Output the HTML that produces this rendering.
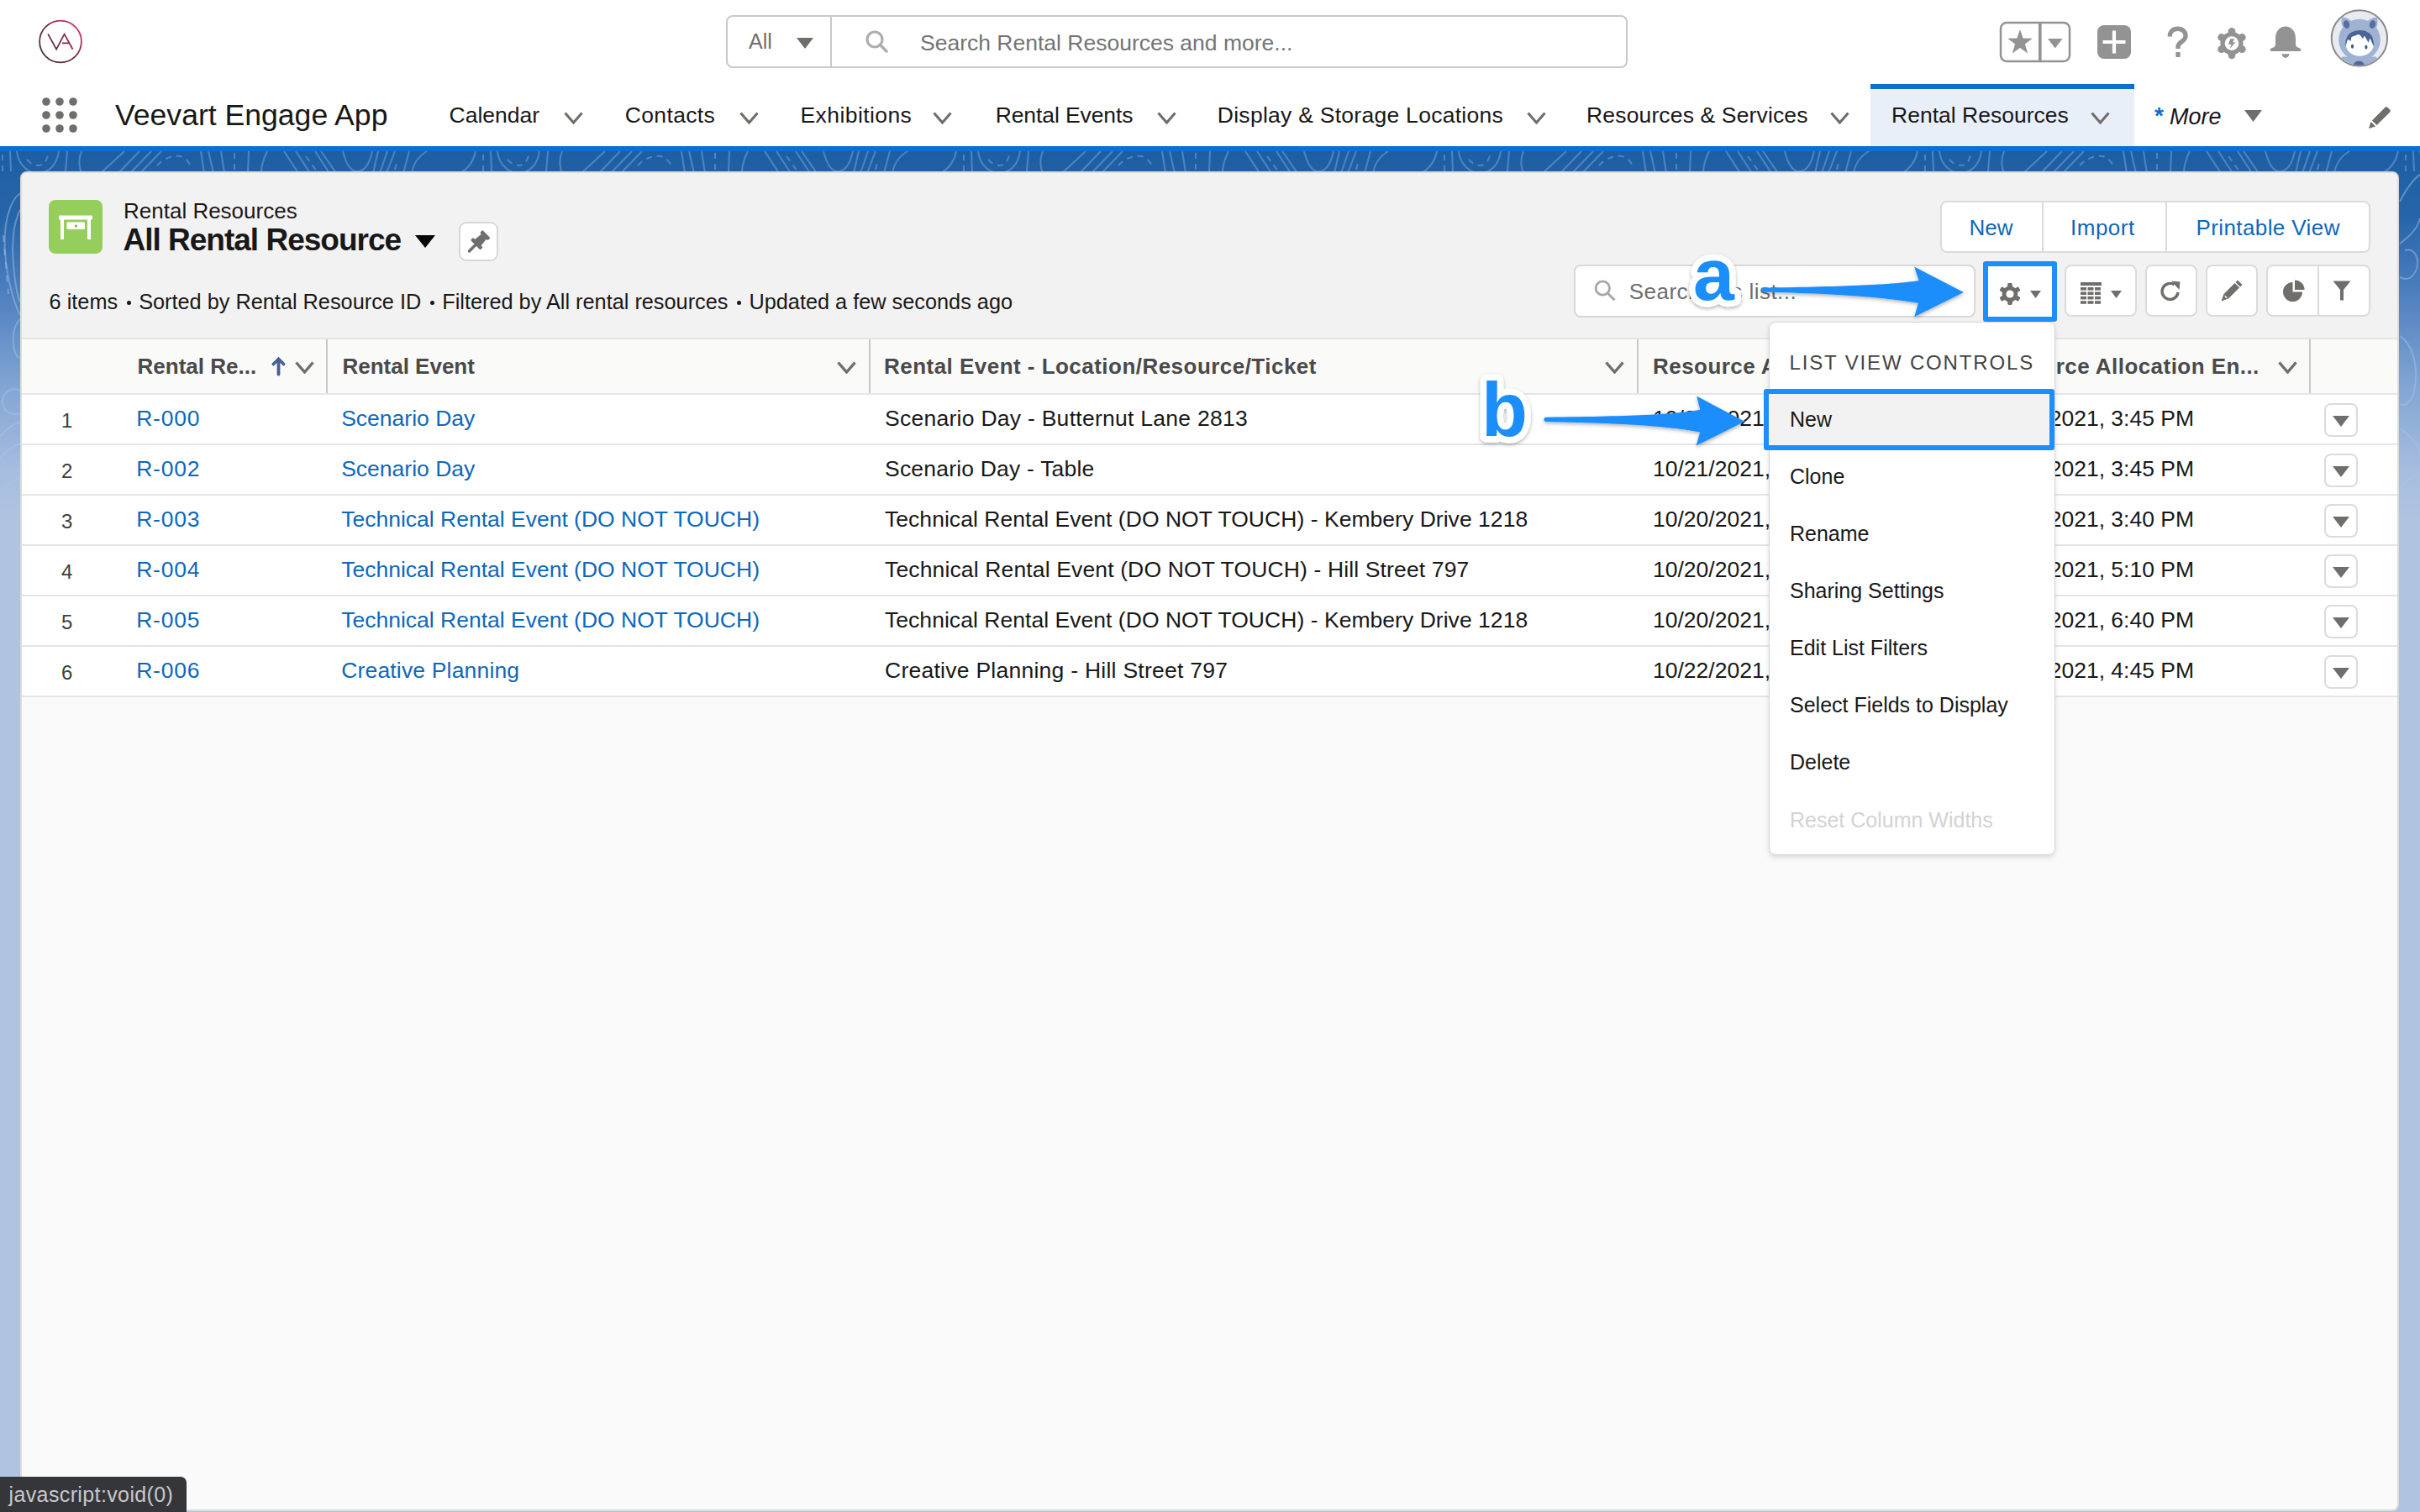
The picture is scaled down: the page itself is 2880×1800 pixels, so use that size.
<!DOCTYPE html>
<html><head><meta charset="utf-8"><title>Rental Resources</title>
<style>
html,body{margin:0;padding:0;}
body{width:2880px;height:1800px;overflow:hidden;position:relative;background:#fff;font-family:"Liberation Sans",sans-serif;color:#181818;}
.t{position:absolute;white-space:nowrap;line-height:1;}
</style></head><body>
<div style="position:absolute;left:0px;top:180px;width:2880px;height:1620px;background:#b0c4df;"></div>
<div style="position:absolute;left:0px;top:180px;width:2880px;height:440px;background:linear-gradient(to bottom,#1d5ea3 0%,#2665aa 18%,#4f80bf 39%,#80a4d2 62.5%,#a6bde0 86%,#b0c4df 100%);"></div>
<svg style="position:absolute;left:0;top:180px" width="2880" height="460" viewBox="0 0 2880 460"><defs>
<pattern id="topo" width="572" height="30" patternUnits="userSpaceOnUse"><g fill="none" stroke="#5f95d0" stroke-width="2" stroke-opacity="0.7"><path d="M12 0 L13 24 M80 0 L78 24 M97 0 C93 10 94 20 97 26 M20 0 C22 18 35 26 45 26 C58 26 68 16 70 0"/>
<path d="M3 4 L3 24 M32 10 C38 17 45 18 50 16 C54 14 57 8 58 0 M187 17 C195 8 205 5 215 6 C220 8 225 12 227 18 M279 2 L279 24 M364 6 L377 24 M470 22 L473 10 M583 0 L583 26" stroke-dasharray="7 6"/>
<path d="M120 26 L148 0 M141 26 L166 0 M155 26 L180 0 M167 26 L192 0 M239 0 L243 26 M248 0 L254 26 M263 0 L267 26 M296 0 L295 26"/>
<path d="M318 0 C313 10 311 18 311 26 M338 0 L355 26 M352 0 L369 26 M375 0 L392 26 M382 0 L400 26 M408 0 C412 16 418 24 425 24 C434 24 440 14 443 0"/>
<path d="M444 26 L450 0 M452 26 L461 0 M460 26 L470 0 M480 26 L487 0 M490 26 C492 14 498 6 508 0 M548 26 C558 20 564 10 566 0"/></g></pattern></defs>
<rect width="2880" height="26" fill="url(#topo)"/>
<g fill="none" stroke="#a9c6ea" stroke-width="2" stroke-opacity="0.45">
<path d="M24 50 C10 60 4 90 6 120 C8 150 16 180 24 195 M24 70 C16 85 14 110 16 135 C18 160 22 175 24 180"/>
<path d="M4 100 L10 170" stroke-dasharray="8 8"/>
<path d="M24 200 C18 205 15 215 16 230 C17 240 20 245 24 246 M24 285 C10 280 2 290 3 300 C4 310 14 315 24 312 M0 340 C8 330 16 325 24 322 M0 365 C10 355 18 350 24 348 M4 400 C10 395 18 392 24 390"/>
<path d="M2856 60 C2866 40 2876 30 2880 28 M2856 110 C2870 100 2878 90 2880 80 M2856 150 C2866 155 2872 150 2876 140 C2880 125 2872 115 2862 118 M2856 220 C2872 230 2880 260 2872 290 C2868 300 2860 305 2856 300 M2856 330 C2870 340 2880 350 2880 360 M2856 400 C2866 390 2876 385 2880 384"/>
</g></svg>
<div style="position:absolute;left:0px;top:0px;width:2880px;height:174px;background:#fff;"></div>
<div style="position:absolute;left:0px;top:174px;width:2880px;height:6px;background:#0b6fd4;"></div>
<svg style="position:absolute;left:44px;top:22px" width="56" height="56" viewBox="0 0 56 56">
<defs><linearGradient id="lg" gradientUnits="userSpaceOnUse" x1="8" y1="48" x2="48" y2="8"><stop offset="0" stop-color="#40303c"/><stop offset="0.55" stop-color="#7a2c4c"/><stop offset="1" stop-color="#d8355d"/></linearGradient></defs>
<circle cx="28" cy="27.5" r="24.9" fill="none" stroke="url(#lg)" stroke-width="1.8"/>
<path d="M13.1 18.4 L23.1 36.6 L32.6 18.6 L42.6 36.8 M29.9 29.4 L38.5 29.2" fill="none" stroke="url(#lg)" stroke-width="1.8" stroke-linejoin="miter"/>
</svg>
<div style="position:absolute;left:864px;top:18px;width:1073px;height:63px;box-sizing:border-box;border:2px solid #c9c9c9;border-radius:8px;background:#fff;"></div>
<div style="position:absolute;left:988px;top:20px;width:2px;height:59px;background:#c9c9c9;"></div>
<div class="t" style="left:891px;top:37px;font-size:25px;color:#706e6b;">All</div>
<svg style="position:absolute;left:947px;top:44px" width="22" height="15" viewBox="0 0 22 15"><path d="M1 1 L21 1 L11 14 Z" fill="#706e6b"/></svg>
<svg style="position:absolute;left:1028px;top:35px" width="32" height="30" viewBox="0 0 32 30"><circle cx="13" cy="12" r="9" fill="none" stroke="#aeaeae" stroke-width="3.2"/><path d="M19.5 18.5 L27 26" stroke="#aeaeae" stroke-width="3.6" stroke-linecap="round"/></svg>
<div class="t" style="left:1095px;top:38px;font-size:26.5px;color:#747474;">Search Rental Resources and more...</div>
<svg style="position:absolute;left:2378px;top:24px" width="88" height="52" viewBox="0 0 88 52">
<rect x="3" y="3" width="82" height="46" rx="7" fill="#fff" stroke="#939393" stroke-width="2.5"/>
<rect x="48" y="3" width="3.6" height="46" fill="#939393"/>
<path d="M26 11 L29.6 21.6 L40.8 21.8 L31.9 28.6 L35.2 39.4 L26 33 L16.8 39.4 L20.1 28.6 L11.2 21.8 L22.4 21.6 Z" fill="#939393"/>
<path d="M59 22 L76.5 22 L67.8 33.6 Z" fill="#939393"/>
</svg>
<svg style="position:absolute;left:2496px;top:30px" width="40" height="40" viewBox="0 0 40 40">
<rect x="0" y="0" width="40" height="40" rx="8" fill="#939393"/>
<path d="M20 6.5 V33.5 M6.5 20 H33.5" stroke="#fff" stroke-width="4.2"/>
</svg>
<svg style="position:absolute;left:2576px;top:30px" width="32" height="42" viewBox="0 0 32 42">
<path d="M6.3 13.5 C6.3 7.5 10 4.3 15.8 4.3 C21.5 4.3 25.1 8 25.1 12.5 C25.1 16.5 22 18.5 19.5 20.3 C17.2 22 16 23.5 16 26 L16 28" fill="none" stroke="#939393" stroke-width="5.4"/>
<rect x="13.3" y="32.1" width="5.4" height="5.9" rx="0.8" fill="#939393"/>
</svg>
<svg style="position:absolute;left:2637px;top:32px" width="38" height="40" viewBox="0 0 38 40">
<g fill="#939393"><circle cx="19" cy="19.6" r="13.6"/><circle cx="19.00" cy="5.40" r="4.4"/><circle cx="31.30" cy="12.50" r="4.4"/><circle cx="31.30" cy="26.70" r="4.4"/><circle cx="19.00" cy="33.80" r="4.4"/><circle cx="6.70" cy="26.70" r="4.4"/><circle cx="6.70" cy="12.50" r="4.4"/></g>
<circle cx="19" cy="19.6" r="8.3" fill="#fff"/>
<path d="M17.4 14.2 L22.4 14.2 L20 18.2 L23.4 18.2 L16.8 26 L18.4 20.8 L14.8 20.8 Z" fill="#939393"/>
</svg>
<svg style="position:absolute;left:2699px;top:30px" width="42" height="42" viewBox="0 0 42 42">
<path d="M9 16 C9 7.5 14 1.6 21 1.6 C28 1.6 33 7.5 33 16 L33 23 C33 25 35 26.5 37 27 C38.6 27.5 39.2 28.5 39.2 29.5 L39.2 30 C39.2 30.6 38.7 31 38 31 L4 31 C3.3 31 2.8 30.6 2.8 30 L2.8 29.5 C2.8 28.5 3.4 27.5 5 27 C7 26.5 9 25 9 23 Z" fill="#939393"/>
<path d="M16.4 34.2 L25.5 34.2 C25 37 23.5 38.8 21 38.8 C18.5 38.8 17 37 16.4 34.2 Z" fill="#939393"/>
</svg>
<svg style="position:absolute;left:2773px;top:11px" width="70" height="70" viewBox="0 0 70 70">
<defs><clipPath id="av"><circle cx="34.9" cy="34.4" r="32.3"/></clipPath></defs>
<circle cx="34.9" cy="34.4" r="33.2" fill="#e9ebf2" stroke="#8a8a8a" stroke-width="2"/>
<g clip-path="url(#av)">
<path d="M14 10 C18 9 22 11 25 14 L45 14 C48 11 52 9 56 10 C57 14 57 18 55 22 L16 22 C13 18 13 14 14 10 Z" fill="#9fb2d2"/>
<circle cx="35" cy="36.5" r="24.8" fill="#9fb2d2"/>
<path d="M10 78 L14 56.5 L55 56.5 L60 78 Z" fill="#9fb2d2"/>
<ellipse cx="19.5" cy="18" rx="3.6" ry="5" transform="rotate(-15 19.5 18)" fill="#56709e"/>
<ellipse cx="50.5" cy="18" rx="3.6" ry="5" transform="rotate(15 50.5 18)" fill="#56709e"/>
<ellipse cx="35.3" cy="40.5" rx="17" ry="15.2" fill="#fff"/>
<path d="M18.3 45 C17 34 22 25.5 35 25 C47 24.5 53.5 33 52 44.5 C50.5 41 49 38 47.5 34.5 C46.5 37 46 38.5 45.5 40 C44 36.5 42.5 33.5 40.5 31.5 C40 34 39.5 34.5 39 35 C37.5 33 36 31 34 29.5 C35 31 34 30.5 33.5 30 C31 31 28 32 25.5 33 C25 35 24.8 36.5 24.5 38 C23 37 22 36 21 36 C20 39 19 42 18.3 45 Z" fill="#4a6596"/>
<ellipse cx="26.5" cy="44.2" rx="1.6" ry="2.6" fill="#4a5a80"/>
<ellipse cx="42.9" cy="45" rx="1.6" ry="2.6" fill="#4a5a80"/>
<circle cx="34.3" cy="68.5" r="7" fill="#4f6898"/>
</g></svg>
<svg style="position:absolute;left:48px;top:114px" width="46" height="46" viewBox="0 0 46 46"><g fill="#706e6b"><circle cx="7" cy="7" r="4.8"/><circle cx="7" cy="23" r="4.8"/><circle cx="7" cy="39" r="4.8"/><circle cx="23" cy="7" r="4.8"/><circle cx="23" cy="23" r="4.8"/><circle cx="23" cy="39" r="4.8"/><circle cx="39" cy="7" r="4.8"/><circle cx="39" cy="23" r="4.8"/><circle cx="39" cy="39" r="4.8"/></g></svg>
<div class="t" style="left:137px;top:120px;font-size:35.6px;">Veevart Engage App</div>
<div style="position:absolute;left:2226px;top:100px;width:314px;height:74px;background:#e9eff9;"></div>
<div style="position:absolute;left:2226px;top:100px;width:314px;height:6px;background:#0b6fd4;"></div>
<div class="t" style="left:534.5px;top:124px;font-size:26.5px;">Calendar</div>
<svg style="position:absolute;left:671px;top:133px" width="23" height="15" viewBox="0 0 23 15"><path d="M1.5 1.5 L11.5 13 L21.5 1.5" fill="none" stroke="#706e6b" stroke-width="3.1"/></svg>
<div class="t" style="left:743.8px;top:124px;font-size:26.5px;letter-spacing:0.35px;">Contacts</div>
<svg style="position:absolute;left:880px;top:133px" width="23" height="15" viewBox="0 0 23 15"><path d="M1.5 1.5 L11.5 13 L21.5 1.5" fill="none" stroke="#706e6b" stroke-width="3.1"/></svg>
<div class="t" style="left:952.5px;top:124px;font-size:26.5px;letter-spacing:0.42px;">Exhibitions</div>
<svg style="position:absolute;left:1110px;top:133px" width="23" height="15" viewBox="0 0 23 15"><path d="M1.5 1.5 L11.5 13 L21.5 1.5" fill="none" stroke="#706e6b" stroke-width="3.1"/></svg>
<div class="t" style="left:1184.7px;top:124px;font-size:26.5px;letter-spacing:-0.1px;">Rental Events</div>
<svg style="position:absolute;left:1377px;top:133px" width="23" height="15" viewBox="0 0 23 15"><path d="M1.5 1.5 L11.5 13 L21.5 1.5" fill="none" stroke="#706e6b" stroke-width="3.1"/></svg>
<div class="t" style="left:1448.8px;top:124px;font-size:26.5px;letter-spacing:0.27px;">Display &amp; Storage Locations</div>
<svg style="position:absolute;left:1817px;top:133px" width="23" height="15" viewBox="0 0 23 15"><path d="M1.5 1.5 L11.5 13 L21.5 1.5" fill="none" stroke="#706e6b" stroke-width="3.1"/></svg>
<div class="t" style="left:1888.1px;top:124px;font-size:26.5px;letter-spacing:0.14px;">Resources &amp; Services</div>
<svg style="position:absolute;left:2178px;top:133px" width="23" height="15" viewBox="0 0 23 15"><path d="M1.5 1.5 L11.5 13 L21.5 1.5" fill="none" stroke="#706e6b" stroke-width="3.1"/></svg>
<div class="t" style="left:2251.1px;top:124px;font-size:26.5px;">Rental Resources</div>
<svg style="position:absolute;left:2488px;top:133px" width="23" height="15" viewBox="0 0 23 15"><path d="M1.5 1.5 L11.5 13 L21.5 1.5" fill="none" stroke="#706e6b" stroke-width="3.1"/></svg>
<div class="t" style="left:2564px;top:124px;font-size:28px;font-weight:700;color:#0b6fd4;">*</div>
<div class="t" style="left:2582px;top:126px;font-size:27px;font-style:italic;">More</div>
<svg style="position:absolute;left:2670px;top:130px" width="23" height="16" viewBox="0 0 23 16"><path d="M1 1 L22 1 L11.5 15 Z" fill="#706e6b"/></svg>
<svg style="position:absolute;left:2818px;top:126px" width="28" height="28" viewBox="0 0 28 28"><path d="M20.5 1.8 C21.3 1 22.6 1 23.4 1.8 L26.2 4.6 C27 5.4 27 6.7 26.2 7.5 L10.6 23.1 L4.9 17.4 Z" fill="#706e6b"/><path d="M3.6 18.9 L9.1 24.4 L1 27 Z" fill="#706e6b"/></svg>
<div style="position:absolute;left:24px;top:204px;width:2831px;height:1595px;box-sizing:border-box;border:2px solid #dddbda;border-radius:8px;background:#fafafa;overflow:hidden;"></div>
<div style="position:absolute;left:26px;top:206px;width:2827px;height:197px;background:#f3f2f2;border-radius:6px 6px 0 0;"></div>
<svg style="position:absolute;left:58px;top:238px" width="64" height="64" viewBox="0 0 64 64">
<rect width="64" height="64" rx="8" fill="#96ce5d"/>
<rect x="12" y="18.5" width="40" height="5" rx="1" fill="#fff"/>
<rect x="14" y="23" width="4" height="24" fill="#fff"/><rect x="46" y="23" width="4" height="24" fill="#fff"/>
<rect x="21.5" y="26.5" width="21.5" height="8.5" rx="1" fill="#fff"/>
<circle cx="32.5" cy="31" r="1.6" fill="#7fae52"/>
</svg>
<div class="t" style="left:147px;top:238px;font-size:26px;">Rental Resources</div>
<div class="t" style="left:146.5px;top:267px;font-size:37px;font-weight:700;letter-spacing:-1px;">All Rental Resource</div>
<svg style="position:absolute;left:493px;top:279px" width="26" height="17" viewBox="0 0 26 17"><path d="M1 1 L25 1 L13 16 Z" fill="#080707"/></svg>
<div style="position:absolute;left:546px;top:264px;width:47px;height:47px;box-sizing:border-box;border:2px solid #d8d8d8;border-radius:9px;background:#fff;"></div>
<svg style="position:absolute;left:553px;top:271px" width="34" height="34" viewBox="0 0 34 34"><g transform="translate(25.9 7.6) rotate(45)" fill="#706e6b"><rect x="-6.6" y="0" width="13.2" height="4.4" rx="1.2"/><path d="M-4.2 4 L4.2 4 L5.4 15 L-5.4 15 Z"/><rect x="-8.2" y="14.2" width="16.4" height="4.4" rx="1.2"/><rect x="-1.7" y="17" width="3.4" height="13.6" rx="1.7"/></g></svg>
<div class="t" style="left:58.6px;top:347px;font-size:25.3px;">6 items<span style="display:inline-block;width:5px;height:5px;border-radius:50%;background:#181818;margin:0 9.5px 0 10.5px;vertical-align:5.5px"></span>Sorted by Rental Resource ID<span style="display:inline-block;width:5px;height:5px;border-radius:50%;background:#181818;margin:0 9.5px 0 10.5px;vertical-align:5.5px"></span>Filtered by All rental resources<span style="display:inline-block;width:5px;height:5px;border-radius:50%;background:#181818;margin:0 9.5px 0 10.5px;vertical-align:5.5px"></span>Updated a few seconds ago</div>
<div style="position:absolute;left:2309px;top:239px;width:512px;height:62px;box-sizing:border-box;border:2px solid #dddbda;border-radius:8px;background:#fff;"></div>
<div style="position:absolute;left:2430px;top:241px;width:2px;height:58px;background:#dddbda;"></div>
<div style="position:absolute;left:2577px;top:241px;width:2px;height:58px;background:#dddbda;"></div>
<div class="t" style="left:2343.6px;top:258px;font-size:26px;color:#0d68bb;">New</div>
<div class="t" style="left:2464px;top:258px;font-size:26px;color:#0d68bb;letter-spacing:0.5px;">Import</div>
<div class="t" style="left:2613.5px;top:258px;font-size:26px;color:#0d68bb;letter-spacing:0.4px;">Printable View</div>
<div style="position:absolute;left:1872.5px;top:314.5px;width:478.5px;height:63px;box-sizing:border-box;border:2px solid #d8d8d8;border-radius:8px;background:#fff;"></div>
<svg style="position:absolute;left:1896px;top:332px" width="28" height="28" viewBox="0 0 28 28"><circle cx="11.3" cy="11" r="8.2" fill="none" stroke="#a8a8a8" stroke-width="2.8"/><path d="M17.2 17 L25.5 25.2" stroke="#a8a8a8" stroke-width="3"/></svg>
<div class="t" style="left:1938.8px;top:334px;font-size:26px;color:#6e6e6e;letter-spacing:0.45px;">Search this list...</div>
<div style="position:absolute;left:2362px;top:313px;width:84px;height:68px;background:#fff;"></div>
<div style="position:absolute;left:2457px;top:315px;width:86px;height:62px;box-sizing:border-box;border:2px solid #dddbda;border-radius:8px;background:#fff;"></div>
<div style="position:absolute;left:2553px;top:315px;width:62px;height:62px;box-sizing:border-box;border:2px solid #dddbda;border-radius:8px;background:#fff;"></div>
<div style="position:absolute;left:2625px;top:315px;width:62px;height:62px;box-sizing:border-box;border:2px solid #dddbda;border-radius:8px;background:#fff;"></div>
<div style="position:absolute;left:2697px;top:315px;width:124px;height:62px;box-sizing:border-box;border:2px solid #dddbda;border-radius:8px;background:#fff;"></div>
<div style="position:absolute;left:2758px;top:317px;width:2px;height:58px;background:#dddbda;"></div>
<svg style="position:absolute;left:2378px;top:335px" width="28" height="30" viewBox="0 0 28 30">
<g fill="#706e6b"><circle cx="14" cy="15" r="9.4"/>
<rect x="11.2" y="2" width="5.6" height="6.5" rx="1.4"/><rect x="11.2" y="21.5" width="5.6" height="6.5" rx="1.4"/>
<rect x="11.2" y="2" width="5.6" height="6.5" rx="1.4" transform="rotate(60 14 15)"/><rect x="11.2" y="21.5" width="5.6" height="6.5" rx="1.4" transform="rotate(60 14 15)"/>
<rect x="11.2" y="2" width="5.6" height="6.5" rx="1.4" transform="rotate(-60 14 15)"/><rect x="11.2" y="21.5" width="5.6" height="6.5" rx="1.4" transform="rotate(-60 14 15)"/></g>
<circle cx="14" cy="15" r="4.6" fill="#fff"/></svg>
<svg style="position:absolute;left:2416px;top:346px" width="13" height="9" viewBox="0 0 13 9"><path d="M0 0 L13 0 L6.5 9 Z" fill="#706e6b"/></svg>
<svg style="position:absolute;left:2476px;top:336px" width="25" height="27" viewBox="0 0 25 27"><g fill="#706e6b">
<rect x="0" y="0" width="25" height="4"/><rect x="0.0" y="6.0" width="7" height="3.6"/><rect x="8.5" y="6.0" width="7" height="3.6"/><rect x="17.0" y="6.0" width="7" height="3.6"/><rect x="0.0" y="11.4" width="7" height="3.6"/><rect x="8.5" y="11.4" width="7" height="3.6"/><rect x="17.0" y="11.4" width="7" height="3.6"/><rect x="0.0" y="16.8" width="7" height="3.6"/><rect x="8.5" y="16.8" width="7" height="3.6"/><rect x="17.0" y="16.8" width="7" height="3.6"/><rect x="0.0" y="22.200000000000003" width="7" height="3.6"/><rect x="8.5" y="22.200000000000003" width="7" height="3.6"/><rect x="17.0" y="22.200000000000003" width="7" height="3.6"/></g></svg>
<svg style="position:absolute;left:2512px;top:346px" width="13" height="9" viewBox="0 0 13 9"><path d="M0 0 L13 0 L6.5 9 Z" fill="#706e6b"/></svg>
<svg style="position:absolute;left:2570px;top:332px" width="28" height="28" viewBox="0 0 28 28"><path d="M22 16 A9.5 9.5 0 1 1 17.5 6.8" fill="none" stroke="#706e6b" stroke-width="3.4"/><path d="M14 2.5 L24.5 3.5 L23.5 13 Z" fill="#706e6b"/></svg>
<svg style="position:absolute;left:2642px;top:332px" width="28" height="28" viewBox="0 0 28 28"><path d="M21 1.5 L26.5 7 L10 23.5 L4.5 18 Z" fill="#706e6b"/><path d="M4.5 18 L10 23.5 L1.5 26.5 Z" fill="#706e6b"/><path d="M17.8 4.2 L23.8 10.2 M5.8 20.5 L8 22.7" stroke="#fff" stroke-width="1.3"/></svg>
<svg style="position:absolute;left:2717px;top:332px" width="27" height="28" viewBox="0 0 27 28"><path d="M11.5 4 A11.5 11.5 0 1 0 23 15.5 L11.5 15.5 Z" fill="#706e6b"/><path d="M14 1.5 A11.5 11.5 0 0 1 25.5 13 L14 13 Z" fill="#706e6b"/></svg>
<svg style="position:absolute;left:2776px;top:334px" width="22" height="25" viewBox="0 0 22 25"><path d="M0.5 0.5 L21.5 0.5 L13 11 L13 23.5 L9 23.5 L9 11 Z" fill="#706e6b"/></svg>
<div style="position:absolute;left:26px;top:403px;width:2827px;height:66px;background:#fafaf9;"></div>
<div style="position:absolute;left:26px;top:402px;width:2827px;height:2px;background:#e5e5e5;"></div>
<div style="position:absolute;left:26px;top:468px;width:2827px;height:2px;background:#e5e5e5;"></div>
<div style="position:absolute;left:26px;top:470px;width:2827px;height:58px;background:#fff;"></div>
<div style="position:absolute;left:26px;top:528px;width:2827px;height:2px;background:#e5e5e5;"></div>
<div style="position:absolute;left:26px;top:530px;width:2827px;height:58px;background:#fff;"></div>
<div style="position:absolute;left:26px;top:588px;width:2827px;height:2px;background:#e5e5e5;"></div>
<div style="position:absolute;left:26px;top:590px;width:2827px;height:58px;background:#fff;"></div>
<div style="position:absolute;left:26px;top:648px;width:2827px;height:2px;background:#e5e5e5;"></div>
<div style="position:absolute;left:26px;top:650px;width:2827px;height:58px;background:#fff;"></div>
<div style="position:absolute;left:26px;top:708px;width:2827px;height:2px;background:#e5e5e5;"></div>
<div style="position:absolute;left:26px;top:710px;width:2827px;height:58px;background:#fff;"></div>
<div style="position:absolute;left:26px;top:768px;width:2827px;height:2px;background:#e5e5e5;"></div>
<div style="position:absolute;left:26px;top:770px;width:2827px;height:58px;background:#fff;"></div>
<div style="position:absolute;left:26px;top:828px;width:2827px;height:2px;background:#e5e5e5;"></div>
<div style="position:absolute;left:388px;top:404px;width:2px;height:64px;background:#c9c9c9;"></div>
<div style="position:absolute;left:1034px;top:404px;width:2px;height:64px;background:#c9c9c9;"></div>
<div style="position:absolute;left:1948px;top:404px;width:2px;height:64px;background:#c9c9c9;"></div>
<div style="position:absolute;left:2347px;top:404px;width:2px;height:64px;background:#c9c9c9;"></div>
<div style="position:absolute;left:2748px;top:404px;width:2px;height:64px;background:#c9c9c9;"></div>
<div class="t" style="left:163.6px;top:423px;font-size:26px;font-weight:700;color:#4a4a4a;">Rental Re...</div>
<svg style="position:absolute;left:322px;top:424px" width="18" height="24" viewBox="0 0 18 24"><path d="M3.4 9.6 L9.5 3.4 L15.6 9.6" fill="none" stroke="#485e96" stroke-width="3.6" stroke-linecap="round" stroke-linejoin="miter"/><path d="M9.5 4 L9.5 21.6" stroke="#485e96" stroke-width="3.8" stroke-linecap="round"/></svg>
<svg style="position:absolute;left:351px;top:430px" width="23" height="15" viewBox="0 0 23 15"><path d="M1.5 1.5 L11.5 13 L21.5 1.5" fill="none" stroke="#706e6b" stroke-width="3.4"/></svg>
<div class="t" style="left:407.4px;top:423px;font-size:26px;font-weight:700;color:#4a4a4a;">Rental Event</div>
<svg style="position:absolute;left:996px;top:430px" width="23" height="15" viewBox="0 0 23 15"><path d="M1.5 1.5 L11.5 13 L21.5 1.5" fill="none" stroke="#706e6b" stroke-width="3.4"/></svg>
<div class="t" style="left:1052px;top:423px;font-size:26px;font-weight:700;color:#4a4a4a;letter-spacing:0.47px;">Rental Event - Location/Resource/Ticket</div>
<svg style="position:absolute;left:1910px;top:430px" width="23" height="15" viewBox="0 0 23 15"><path d="M1.5 1.5 L11.5 13 L21.5 1.5" fill="none" stroke="#706e6b" stroke-width="3.4"/></svg>
<div class="t" style="left:1967px;top:423px;font-size:26px;font-weight:700;color:#4a4a4a;letter-spacing:0.45px;">Resource Allocation St...</div>
<svg style="position:absolute;left:2308px;top:430px" width="23" height="15" viewBox="0 0 23 15"><path d="M1.5 1.5 L11.5 13 L21.5 1.5" fill="none" stroke="#706e6b" stroke-width="3.4"/></svg>
<div class="t" style="left:2365px;top:423px;font-size:26px;font-weight:700;color:#4a4a4a;letter-spacing:0.45px;">Resource Allocation En...</div>
<svg style="position:absolute;left:2711px;top:430px" width="23" height="15" viewBox="0 0 23 15"><path d="M1.5 1.5 L11.5 13 L21.5 1.5" fill="none" stroke="#706e6b" stroke-width="3.4"/></svg>
<div class="t" style="left:73px;top:488.7px;font-size:24px;color:#3e3e3c;">1</div>
<div class="t" style="left:162.2px;top:485.2px;font-size:26.5px;color:#0d68bb;letter-spacing:0.8px;">R-000</div>
<div class="t" style="left:406.2px;top:485.2px;font-size:26.5px;color:#0d68bb;">Scenario Day</div>
<div class="t" style="left:1053px;top:485.2px;font-size:26.5px;letter-spacing:0.27px;">Scenario Day - Butternut Lane 2813</div>
<div class="t" style="left:1967px;top:485.2px;font-size:26.5px;">10/21/2021, 3:45 PM</div>
<div class="t" style="left:2365px;top:485.2px;font-size:26.5px;">10/21/2021, 3:45 PM</div>
<div style="position:absolute;left:2766px;top:480px;width:40px;height:40px;box-sizing:border-box;border:2px solid #dddbda;border-radius:8px;background:#fff;"></div>
<svg style="position:absolute;left:2776px;top:495px" width="20" height="13" viewBox="0 0 20 13"><path d="M0 0 L20 0 L10.0 13 Z" fill="#706e6b"/></svg>
<div class="t" style="left:73px;top:548.7px;font-size:24px;color:#3e3e3c;">2</div>
<div class="t" style="left:162.2px;top:545.2px;font-size:26.5px;color:#0d68bb;letter-spacing:0.8px;">R-002</div>
<div class="t" style="left:406.2px;top:545.2px;font-size:26.5px;color:#0d68bb;">Scenario Day</div>
<div class="t" style="left:1053px;top:545.2px;font-size:26.5px;letter-spacing:0.2px;">Scenario Day - Table</div>
<div class="t" style="left:1967px;top:545.2px;font-size:26.5px;">10/21/2021, 3:45 PM</div>
<div class="t" style="left:2365px;top:545.2px;font-size:26.5px;">10/21/2021, 3:45 PM</div>
<div style="position:absolute;left:2766px;top:540px;width:40px;height:40px;box-sizing:border-box;border:2px solid #dddbda;border-radius:8px;background:#fff;"></div>
<svg style="position:absolute;left:2776px;top:555px" width="20" height="13" viewBox="0 0 20 13"><path d="M0 0 L20 0 L10.0 13 Z" fill="#706e6b"/></svg>
<div class="t" style="left:73px;top:608.7px;font-size:24px;color:#3e3e3c;">3</div>
<div class="t" style="left:162.2px;top:605.2px;font-size:26.5px;color:#0d68bb;letter-spacing:0.8px;">R-003</div>
<div class="t" style="left:406.2px;top:605.2px;font-size:26.5px;color:#0d68bb;">Technical Rental Event (DO NOT TOUCH)</div>
<div class="t" style="left:1053px;top:605.2px;font-size:26.5px;letter-spacing:0.04px;">Technical Rental Event (DO NOT TOUCH) - Kembery Drive 1218</div>
<div class="t" style="left:1967px;top:605.2px;font-size:26.5px;">10/20/2021, 3:40 PM</div>
<div class="t" style="left:2365px;top:605.2px;font-size:26.5px;">10/20/2021, 3:40 PM</div>
<div style="position:absolute;left:2766px;top:600px;width:40px;height:40px;box-sizing:border-box;border:2px solid #dddbda;border-radius:8px;background:#fff;"></div>
<svg style="position:absolute;left:2776px;top:615px" width="20" height="13" viewBox="0 0 20 13"><path d="M0 0 L20 0 L10.0 13 Z" fill="#706e6b"/></svg>
<div class="t" style="left:73px;top:668.7px;font-size:24px;color:#3e3e3c;">4</div>
<div class="t" style="left:162.2px;top:665.2px;font-size:26.5px;color:#0d68bb;letter-spacing:0.8px;">R-004</div>
<div class="t" style="left:406.2px;top:665.2px;font-size:26.5px;color:#0d68bb;">Technical Rental Event (DO NOT TOUCH)</div>
<div class="t" style="left:1053px;top:665.2px;font-size:26.5px;letter-spacing:0.14px;">Technical Rental Event (DO NOT TOUCH) - Hill Street 797</div>
<div class="t" style="left:1967px;top:665.2px;font-size:26.5px;">10/20/2021, 5:10 PM</div>
<div class="t" style="left:2365px;top:665.2px;font-size:26.5px;">10/20/2021, 5:10 PM</div>
<div style="position:absolute;left:2766px;top:660px;width:40px;height:40px;box-sizing:border-box;border:2px solid #dddbda;border-radius:8px;background:#fff;"></div>
<svg style="position:absolute;left:2776px;top:675px" width="20" height="13" viewBox="0 0 20 13"><path d="M0 0 L20 0 L10.0 13 Z" fill="#706e6b"/></svg>
<div class="t" style="left:73px;top:728.7px;font-size:24px;color:#3e3e3c;">5</div>
<div class="t" style="left:162.2px;top:725.2px;font-size:26.5px;color:#0d68bb;letter-spacing:0.8px;">R-005</div>
<div class="t" style="left:406.2px;top:725.2px;font-size:26.5px;color:#0d68bb;">Technical Rental Event (DO NOT TOUCH)</div>
<div class="t" style="left:1053px;top:725.2px;font-size:26.5px;letter-spacing:0.04px;">Technical Rental Event (DO NOT TOUCH) - Kembery Drive 1218</div>
<div class="t" style="left:1967px;top:725.2px;font-size:26.5px;">10/20/2021, 6:40 PM</div>
<div class="t" style="left:2365px;top:725.2px;font-size:26.5px;">10/20/2021, 6:40 PM</div>
<div style="position:absolute;left:2766px;top:720px;width:40px;height:40px;box-sizing:border-box;border:2px solid #dddbda;border-radius:8px;background:#fff;"></div>
<svg style="position:absolute;left:2776px;top:735px" width="20" height="13" viewBox="0 0 20 13"><path d="M0 0 L20 0 L10.0 13 Z" fill="#706e6b"/></svg>
<div class="t" style="left:73px;top:788.7px;font-size:24px;color:#3e3e3c;">6</div>
<div class="t" style="left:162.2px;top:785.2px;font-size:26.5px;color:#0d68bb;letter-spacing:0.8px;">R-006</div>
<div class="t" style="left:406.2px;top:785.2px;font-size:26.5px;color:#0d68bb;letter-spacing:0.17px;">Creative Planning</div>
<div class="t" style="left:1053px;top:785.2px;font-size:26.5px;letter-spacing:0.26px;">Creative Planning - Hill Street 797</div>
<div class="t" style="left:1967px;top:785.2px;font-size:26.5px;">10/22/2021, 4:45 PM</div>
<div class="t" style="left:2365px;top:785.2px;font-size:26.5px;">10/22/2021, 4:45 PM</div>
<div style="position:absolute;left:2766px;top:780px;width:40px;height:40px;box-sizing:border-box;border:2px solid #dddbda;border-radius:8px;background:#fff;"></div>
<svg style="position:absolute;left:2776px;top:795px" width="20" height="13" viewBox="0 0 20 13"><path d="M0 0 L20 0 L10.0 13 Z" fill="#706e6b"/></svg>
<div style="position:absolute;left:2105px;top:383px;width:341px;height:635px;box-sizing:border-box;border:1.5px solid #d6d6d6;border-radius:8px;background:#fff;box-shadow:0 3px 6px rgba(0,0,0,0.12);"></div>
<div class="t" style="left:2129.5px;top:420px;font-size:24px;color:#444444;letter-spacing:1.85px;">LIST VIEW CONTROLS</div>
<div style="position:absolute;left:2105px;top:469px;width:335px;height:61px;background:#f3f2f2;"></div>
<div class="t" style="left:2130px;top:487px;font-size:25px;">New</div>
<div class="t" style="left:2130px;top:555px;font-size:25px;">Clone</div>
<div class="t" style="left:2130px;top:623px;font-size:25px;">Rename</div>
<div class="t" style="left:2130px;top:691px;font-size:25px;">Sharing Settings</div>
<div class="t" style="left:2130px;top:759px;font-size:25px;">Edit List Filters</div>
<div class="t" style="left:2130px;top:827px;font-size:25px;">Select Fields to Display</div>
<div class="t" style="left:2130px;top:895px;font-size:25px;">Delete</div>
<div class="t" style="left:2130px;top:964px;font-size:25px;color:#d3d3d3;">Reset Column Widths</div>
<div style="position:absolute;left:2360px;top:311px;width:88px;height:72px;box-sizing:border-box;border:6px solid #1d8efb;border-radius:3px;"></div>
<div style="position:absolute;left:2099px;top:463px;width:346px;height:73px;box-sizing:border-box;border:6px solid #1d8efb;border-radius:3px;"></div>
<svg style="position:absolute;left:0;top:0" width="2880" height="800" viewBox="0 0 2880 800">
<defs><filter id="sh" x="-20%" y="-50%" width="140%" height="200%"><feDropShadow dx="0" dy="2" stdDeviation="2" flood-opacity="0.3"/></filter></defs>
<path d="M2098.4 342.6 C2200 341 2250 339 2283.7 334 L2278.2 317.5 L2337 348 L2278.2 377.2 L2283 360.7 C2250 355 2200 350 2098.4 347.4 A2.4 2.4 0 0 1 2098.4 342.6 Z" fill="#1d8efb" filter="url(#sh)"/>
<path d="M1840 496.8 C1950 495.5 1995 493 2023.2 487.8 L2019.2 471.6 L2076.4 501.7 L2018.6 530.6 L2023.2 514.4 C1995 509 1950 504 1840 501.9 A2.55 2.55 0 0 1 1840 496.8 Z" fill="#1d8efb" filter="url(#sh)"/>
<g font-family="Liberation Sans" font-weight="700" filter="url(#sh)">
<text x="2015" y="357" font-size="88" fill="#1d8efb" stroke="#fff" stroke-width="15" stroke-linejoin="round" paint-order="stroke">a</text>
<text x="1763" y="518.5" font-size="90" fill="#1d8efb" stroke="#fff" stroke-width="15" stroke-linejoin="round" paint-order="stroke">b</text>
</g></svg>
<div style="position:absolute;left:0px;top:1758px;width:222px;height:42px;background:#35363a;border-top-right-radius:7px;"></div>
<div class="t" style="left:10.5px;top:1767px;font-size:25px;color:#c8c8cc;letter-spacing:0.38px;">javascript:void(0)</div>
</body></html>
